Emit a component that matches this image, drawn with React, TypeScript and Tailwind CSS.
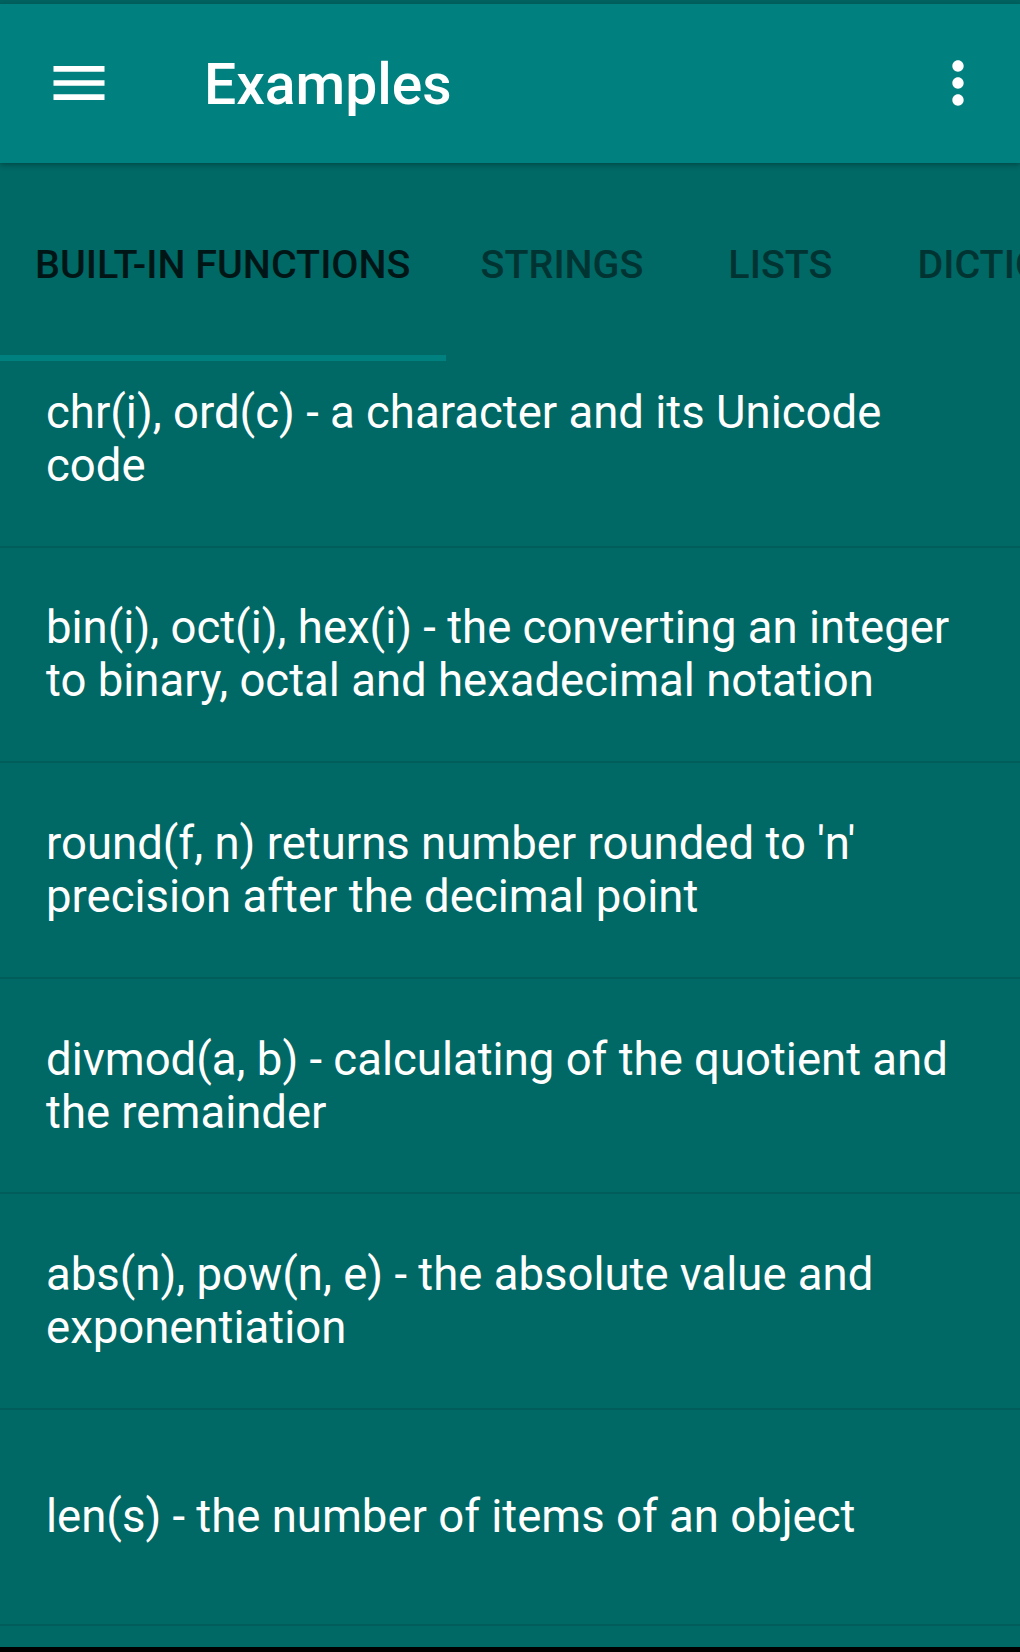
import React from "react";

const tabs = ["BUILT-IN FUNCTIONS", "STRINGS", "LISTS", "DICTIONARIES", "SETS"];

const examples = [
  "chr(i), ord(c) - a character and its Unicode code",
  "bin(i), oct(i), hex(i) - the converting an integer to binary, octal and hexadecimal notation",
  "round(f, n) returns number rounded to 'n' precision after the decimal point",
  "divmod(a, b) - calculating of the quotient and the remainder",
  "abs(n), pow(n, e) - the absolute value and exponentiation",
  "len(s) - the number of items of an object",
];

function MenuIcon() {
  return (
    <svg width="68" height="68" viewBox="0 0 24 24" fill="#ffffff">
      <path d="M3 18h18v-2H3v2zm0-5h18v-2H3v2zm0-7v2h18V6H3z" />
    </svg>
  );
}

function MoreIcon() {
  return (
    <svg width="68" height="68" viewBox="0 0 24 24" fill="#ffffff">
      <path d="M12 8c1.1 0 2-.9 2-2s-.9-2-2-2-2 .9-2 2 .9 2 2 2zm0 2c-1.1 0-2 .9-2 2s.9 2 2 2 2-.9 2-2-.9-2-2-2zm0 6c-1.1 0-2 .9-2 2s.9 2 2 2 2-.9 2-2-.9-2-2-2z" />
    </svg>
  );
}

export default function App() {
  return (
    <div
      className="w-[1020px] h-[1652px] flex flex-col overflow-hidden bg-[#006865]"
      style={{ fontFamily: "Roboto, 'Noto Sans', sans-serif" }}
    >
      {/* status bar remnant */}
      <div className="h-[4px] shrink-0 bg-[#00625f]" />

      {/* App bar */}
      <header className="relative z-10 h-[159px] shrink-0 flex items-center bg-[#008180] shadow-[0_2px_5px_rgba(0,0,0,0.3)]">
        <div className="ml-[45px] -mt-[2px] flex items-center">
          <MenuIcon />
        </div>
        <h1 className="ml-[91px] mt-[2px] text-white text-[57px] font-medium leading-none">
          Examples
        </h1>
        <div className="ml-auto mr-[28px] -mt-[2px] flex items-center">
          <MoreIcon />
        </div>
      </header>

      {/* Tabs */}
      <nav className="h-[198px] shrink-0 flex overflow-hidden whitespace-nowrap">
        {tabs.map((tab, i) => (
          <div
            key={tab}
            className="relative shrink-0 min-w-[204px] px-[35px] pt-[6px] flex items-center justify-center"
          >
            <span
              className={
                i === 0
                  ? "text-[39.5px] font-medium text-[#001616]"
                  : "text-[39.5px] font-medium text-[#003433]"
              }
            >
              {tab}
            </span>
            {i === 0 && (
              <div className="absolute left-0 right-0 bottom-0 h-[6px] bg-[#00817f]" />
            )}
          </div>
        ))}
      </nav>

      {/* Examples list */}
      <div className="flex-1 overflow-hidden">
        <ul className="-mt-[29px]">
          {examples.map((text) => (
            <li
              key={text}
              className="h-[215.6px] box-border flex items-center px-[46px] pr-[60px] border-b-2 border-[#005d5a]"
            >
              <span className="text-white text-[45.5px] leading-[53px]">{text}</span>
            </li>
          ))}
        </ul>
      </div>

      <div className="h-[5px] shrink-0 bg-black" />
    </div>
  );
}
